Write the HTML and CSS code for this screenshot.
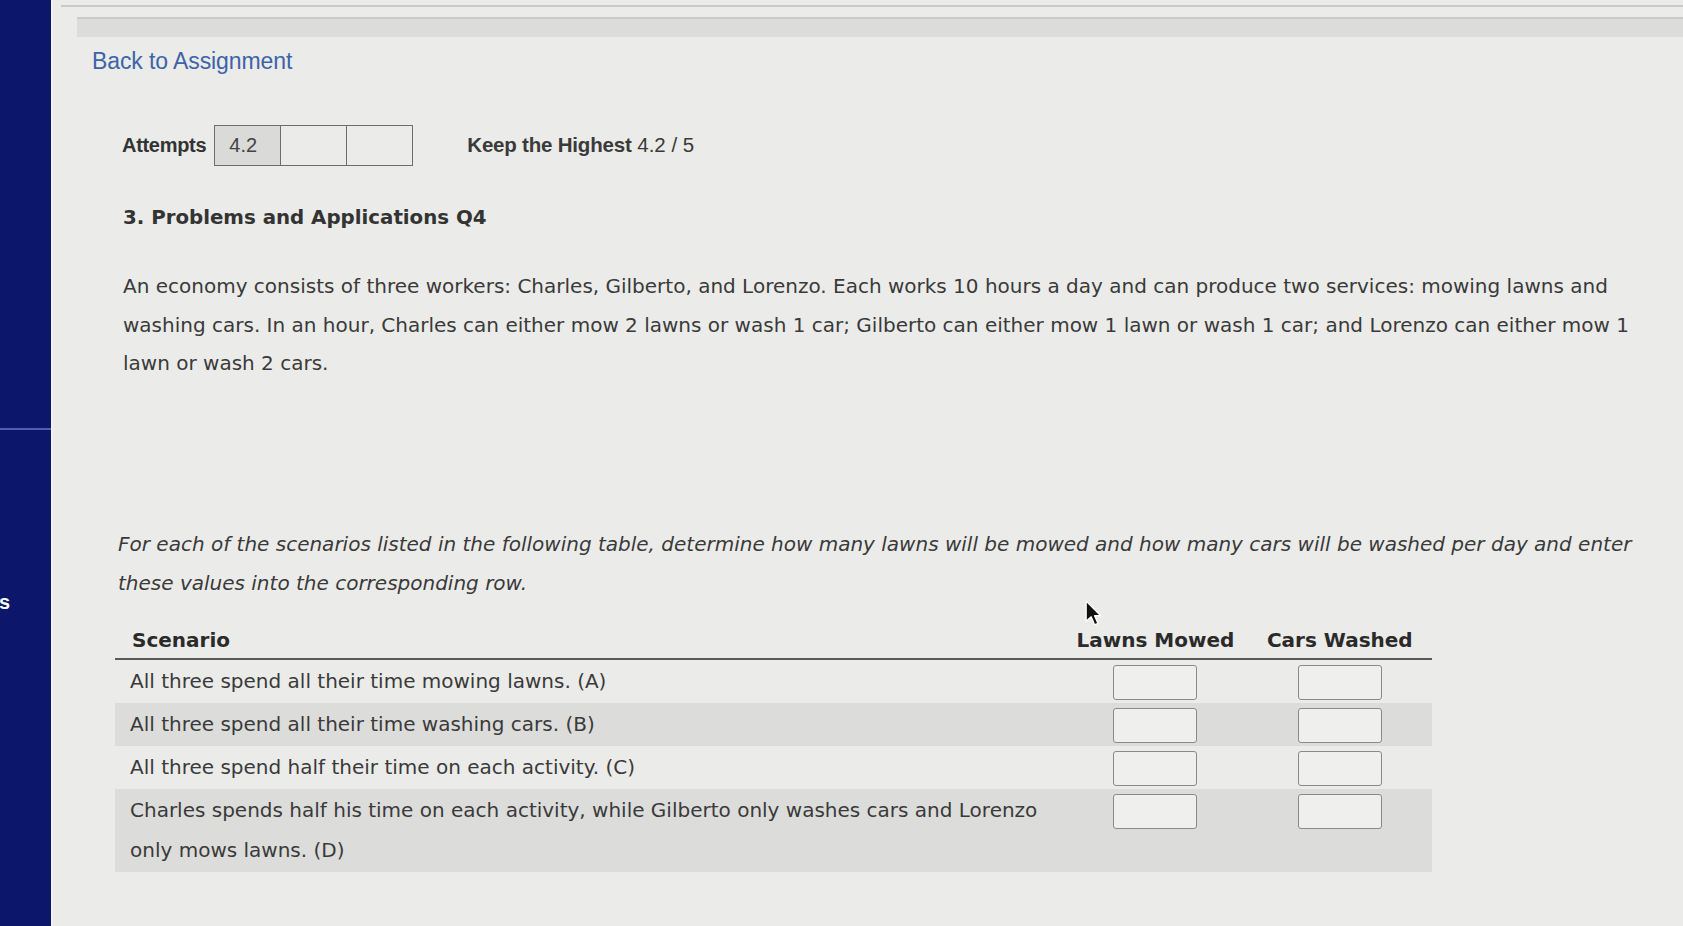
FILE: index.html
```html
<!DOCTYPE html>
<html lang="en">
<head>
<meta charset="utf-8">
<title>Problems and Applications Q4</title>
<link rel="stylesheet" href="styles.css">
</head>
<body>
<div class="app">
  <aside class="sidebar">
    <div class="sep"></div>
    <div class="nav-item">s</div>
  </aside>
  <main class="main">
    <div class="topline"></div>
    <div class="band"></div>
    <a class="back" href="#">Back to Assignment</a>
    <div class="attempts-row">
      <span class="attempts-label">Attempts</span>
      <div class="boxes">
        <span class="box filled">4.2</span>
        <span class="box"></span>
        <span class="box"></span>
      </div>
      <span class="keep"><b>Keep the Highest</b> 4.2 / 5</span>
    </div>
    <h2 class="q-title">3. Problems and Applications Q4</h2>
    <p class="intro">An economy consists of three workers: Charles, Gilberto, and Lorenzo. Each works 10 hours a day and can produce two services: mowing lawns and washing cars. In an hour, Charles can either mow 2 lawns or wash 1 car; Gilberto can either mow 1 lawn or wash 1 car; and Lorenzo can either mow 1 lawn or wash 2 cars.</p>
    <p class="instructions">For each of the scenarios listed in the following table, determine how many lawns will be mowed and how many cars will be washed per day and enter these values into the corresponding row.</p>
    <table class="scen">
      <thead>
        <tr>
          <th class="c-scen">Scenario</th>
          <th class="c-num">Lawns Mowed</th>
          <th class="c-num">Cars Washed</th>
        </tr>
      </thead>
      <tbody>
        <tr>
          <td class="c-scen">All three spend all their time mowing lawns. (A)</td>
          <td class="c-num"><span class="inp"></span></td>
          <td class="c-num"><span class="inp"></span></td>
        </tr>
        <tr class="alt">
          <td class="c-scen">All three spend all their time washing cars. (B)</td>
          <td class="c-num"><span class="inp"></span></td>
          <td class="c-num"><span class="inp"></span></td>
        </tr>
        <tr>
          <td class="c-scen">All three spend half their time on each activity. (C)</td>
          <td class="c-num"><span class="inp"></span></td>
          <td class="c-num"><span class="inp"></span></td>
        </tr>
        <tr class="alt">
          <td class="c-scen">Charles spends half his time on each activity, while Gilberto only washes cars and Lorenzo only mows lawns. (D)</td>
          <td class="c-num"><span class="inp"></span></td>
          <td class="c-num"><span class="inp"></span></td>
        </tr>
      </tbody>
    </table>
  </main>
  <svg class="cursor" width="18" height="27" viewBox="0 0 16 24">
    <path d="M1 1 L1 19 L5.5 15 L8.5 22 L11.5 20.7 L8.5 14 L14 14 Z" fill="#111" stroke="#fff" stroke-width="1.2" stroke-linejoin="round"/>
  </svg>
</div>
</body>
</html>
```
FILE: styles.css
```css
html, body {
  margin: 0;
  padding: 0;
}
body {
  background: #ebebe9;
  color: #3a3a3a;
  font-family: "DejaVu Sans", Verdana, sans-serif;
  width: 1683px;
  height: 926px;
  overflow: hidden;
}
.app {
  position: relative;
  display: flex;
  height: 926px;
}
.sidebar {
  width: 51px;
  flex: 0 0 51px;
  background: #0c166b;
  border-right: 2px solid #f4f2ee;
  display: flex;
  flex-direction: column;
  overflow: hidden;
}
.sep {
  margin-top: 428px;
  height: 2px;
  background: #4f5fae;
}
.nav-item {
  margin-top: 160px;
  margin-left: -1px;
  color: #ffffff;
  font-family: "Liberation Sans", Arial, sans-serif;
  font-weight: bold;
  font-size: 20px;
  line-height: 24px;
}
.main {
  flex: 1;
  display: flex;
  flex-direction: column;
  align-items: flex-start;
}
.topline {
  align-self: stretch;
  height: 5px;
  border-bottom: 2px solid #c9c9c7;
  margin-left: 8px;
}
.band {
  align-self: stretch;
  margin-top: 10px;
  margin-left: 24px;
  height: 18px;
  background: #dcdcda;
  border-top: 2px solid #cacac8;
}
.back {
  margin-top: 11px;
  margin-left: 39px;
  font-family: "Liberation Sans", Arial, sans-serif;
  font-size: 23px;
  line-height: 27px;
  color: #3d63a8;
  text-decoration: none;
  letter-spacing: -0.1px;
}
.attempts-row {
  margin-top: 49px;
  margin-left: 69px;
  display: flex;
  align-items: center;
  height: 42px;
  font-family: "Liberation Sans", Arial, sans-serif;
  font-size: 20px;
  color: #333;
}
.attempts-label {
  font-weight: bold;
  margin-right: 8px;
  letter-spacing: -0.3px;
}
.boxes {
  display: flex;
  border: 1.5px solid #6e6e6e;
}
.box {
  width: 60px;
  height: 39px;
  border-left: 1.5px solid #6e6e6e;
  display: flex;
  align-items: center;
  padding-left: 5px;
  font-size: 20px;
  color: #444;
}
.box:first-child {
  border-left: none;
  padding-left: 14px;
  width: 51px;
}
.box.filled {
  background: #dadad8;
}
.keep {
  margin-left: 54px;
  font-size: 20.5px;
  color: #3a3a3a;
}
.keep b {
  letter-spacing: -0.2px;
}
.q-title {
  margin: 40px 0 0 70px;
  font-size: 19.8px;
  line-height: 24px;
  font-weight: bold;
  color: #333;
}
.intro {
  margin: 37px 0 0 70px;
  width: 1515px;
  font-size: 20px;
  line-height: 38.5px;
  color: #3a3a3a;
}
.instructions {
  margin: 142px 0 0 65px;
  width: 1525px;
  font-size: 20px;
  line-height: 39px;
  font-style: italic;
  color: #3a3a3a;
}
.scen {
  margin: 19px 0 0 62px;
  width: 1317px;
  border-collapse: collapse;
  font-size: 20px;
  color: #3a3a3a;
}
.scen th {
  height: 36px;
  padding: 0;
  line-height: 36px;
  font-weight: bold;
  color: #2a2a2a;
  border-bottom: 2px solid #5a5a5a;
  vertical-align: bottom;
}
.scen th.c-scen {
  text-align: left;
  padding-left: 17px;
}
.c-scen {
  width: 945px;
}
.c-num {
  width: 186px;
  text-align: center;
}
.scen td {
  vertical-align: top;
  line-height: 40px;
  padding: 1.5px 0;
}
.scen td.c-scen {
  padding-left: 15px;
  padding-right: 0;
}
.scen tr.alt td {
  background: #dcdcda;
}
.inp {
  display: inline-block;
  box-sizing: border-box;
  width: 84px;
  height: 35px;
  margin-top: 4px;
  vertical-align: top;
  border: 1.5px solid #8a8a8a;
  border-radius: 3px;
  background: #efefed;
}
.cursor {
  position: absolute;
  left: 1085px;
  top: 600px;
}
```
